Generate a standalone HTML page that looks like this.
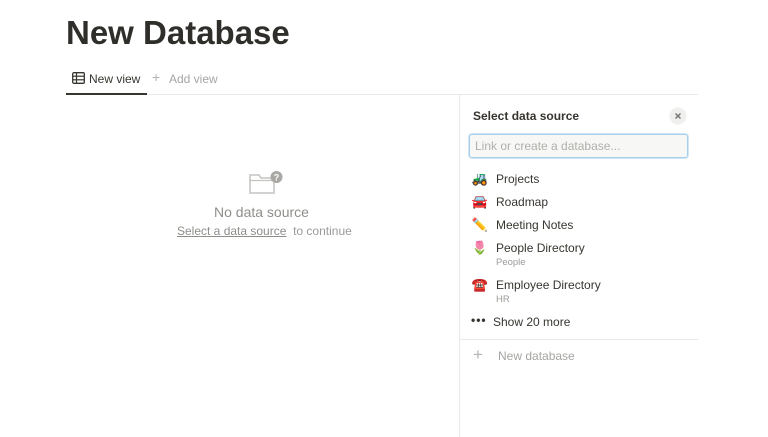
<!DOCTYPE html>
<html><head><meta charset="utf-8"><style>
*{margin:0;padding:0;box-sizing:border-box}
body{width:768px;height:437px;background:#fff;font-family:"Liberation Sans",sans-serif;color:#37352f;position:relative;overflow:hidden}
.a{position:absolute;white-space:nowrap}
.title{left:66px;top:14px;font-size:33px;font-weight:bold;color:#2f2e2a;letter-spacing:0}
.tab{top:72px;font-size:12px}
.item{left:496px;font-size:12px;color:#37352f}
.sub{left:496px;font-size:9.5px;color:#9b9a97}
.ic{left:471px;font-size:13px;width:18px;text-align:center}
</style></head><body>
<div class="a title">New Database</div>
<svg class="a" style="left:72px;top:72px" width="13" height="12" viewBox="0 0 13 12"><rect x="0.7" y="0.7" width="11.6" height="10.6" rx="1.2" fill="none" stroke="#37352f" stroke-width="1.3"/><line x1="0.7" y1="4.2" x2="12.3" y2="4.2" stroke="#37352f" stroke-width="1.2"/><line x1="0.7" y1="7.8" x2="12.3" y2="7.8" stroke="#37352f" stroke-width="1.2"/><line x1="4.5" y1="0.7" x2="4.5" y2="11.3" stroke="#37352f" stroke-width="1.2"/></svg>
<div class="a tab" style="left:89px;color:#37352f">New view</div>
<div class="a tab" style="left:152px;color:#b4b3b0;font-size:14px;top:69px">+</div>
<div class="a tab" style="left:169px;color:#a6a5a2">Add view</div>
<div class="a" style="left:66px;top:94px;width:632px;height:1px;background:#e9e9e7"></div>
<div class="a" style="left:66px;top:93px;width:81px;height:2px;background:#37352f"></div>

<svg class="a" style="left:248px;top:170px" width="36" height="26" viewBox="0 0 36 26"><path d="M2 5h9l2 3h13v15H2z" fill="none" stroke="#c4c3c0" stroke-width="1.5"/><line x1="2" y1="10.5" x2="26" y2="10.5" stroke="#c4c3c0" stroke-width="1.3"/><circle cx="28.5" cy="7" r="6" fill="#a9a8a5"/><text x="28.5" y="10.3" font-size="9" font-weight="bold" fill="#fff" text-anchor="middle" font-family="Liberation Sans">?</text></svg>
<div class="a" style="left:214px;top:204px;font-size:14px;color:#8f8e8a">No data source</div>
<div class="a" style="left:177px;top:224px;font-size:12px;color:#9b9a97"><span style="text-decoration:underline;color:#8f8e8a">Select a data source</span>&nbsp; to continue</div>

<div class="a" style="left:459px;top:95px;width:1px;height:342px;background:#e9e9e7"></div>
<div class="a" style="left:473px;top:109px;font-size:12px;font-weight:bold;color:#37352f">Select data source</div>
<svg class="a" style="left:669px;top:107px" width="18" height="18" viewBox="0 0 18 18"><circle cx="9" cy="9" r="8.5" fill="#efefed"/><path d="M6.5 6.5l5 5M11.5 6.5l-5 5" stroke="#73726e" stroke-width="1.4"/></svg>
<div class="a" style="left:469px;top:134px;width:219px;height:24px;border:1.5px solid #a6cdea;border-radius:3px;background:#f7f7f5;box-shadow:0 0 0 1px #d3e6f4"></div>
<div class="a" style="left:475px;top:139px;font-size:12px;color:#b0afab">Link or create a database...</div>

<div class="a ic" style="top:171px">🚜</div><div class="a item" style="top:172px">Projects</div>
<div class="a ic" style="top:194px">🚘</div><div class="a item" style="top:195px">Roadmap</div>
<div class="a ic" style="top:217px">✏️</div><div class="a item" style="top:218px">Meeting Notes</div>
<div class="a ic" style="top:240px">🌷</div><div class="a item" style="top:241px">People Directory</div>
<div class="a sub" style="top:257px">People</div>
<div class="a ic" style="top:277px">☎️</div><div class="a item" style="top:278px">Employee Directory</div>
<div class="a sub" style="top:294px">HR</div>
<div class="a" style="left:471px;top:313px;font-size:12px;font-weight:bold;letter-spacing:1px;color:#37352f">•••</div>
<div class="a item" style="left:493px;top:315px">Show 20 more</div>
<div class="a" style="left:460px;top:339px;width:238px;height:1px;background:#e9e9e7"></div>
<div class="a" style="left:473px;top:345px;font-size:17px;color:#b4b3b0">+</div>
<div class="a item" style="left:498px;top:349px;color:#a6a5a2">New database</div>
</body></html>
